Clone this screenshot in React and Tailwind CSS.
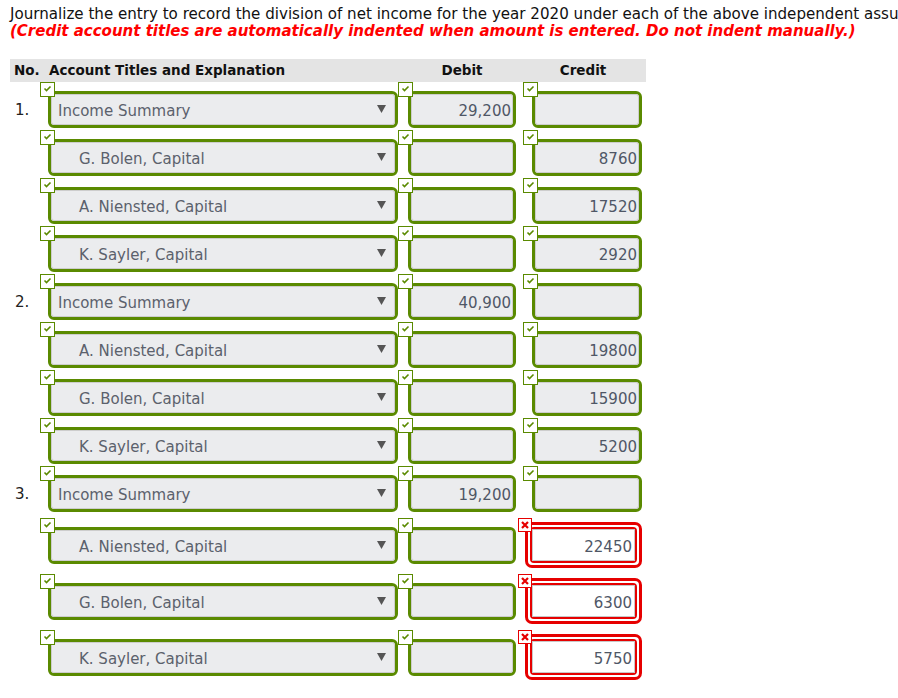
import React from 'react';

const rows = [
  { no: '1.', acct: 'Income Summary', debit: '29,200', credit: '' },
  { acct: 'G. Bolen, Capital', indent: true, credit: '8760' },
  { acct: 'A. Niensted, Capital', indent: true, credit: '17520' },
  { acct: 'K. Sayler, Capital', indent: true, credit: '2920' },
  { no: '2.', acct: 'Income Summary', debit: '40,900', credit: '' },
  { acct: 'A. Niensted, Capital', indent: true, credit: '19800' },
  { acct: 'G. Bolen, Capital', indent: true, credit: '15900' },
  { acct: 'K. Sayler, Capital', indent: true, credit: '5200' },
  { no: '3.', acct: 'Income Summary', debit: '19,200', credit: '' },
  { acct: 'A. Niensted, Capital', indent: true, credit: '22450', wrong: true },
  { acct: 'G. Bolen, Capital', indent: true, credit: '6300', wrong: true },
  { acct: 'K. Sayler, Capital', indent: true, credit: '5750', wrong: true },
];

const Check = ({ className }) => (
  <span className={`absolute w-[15px] h-[15px] bg-white border border-[#5a8a00] z-10 ${className}`}>
    <svg width="13" height="13" viewBox="0 0 13 13" className="block">
      <path d="M3.5 5.5 L5.5 7.5 L9.5 3.5" fill="none" stroke="#5a8a00" strokeWidth="1.6" />
    </svg>
  </span>
);

const Cross = ({ className }) => (
  <span className={`absolute w-[14px] h-[14px] bg-white border border-[#e60000] z-10 ${className}`}>
    <svg width="12" height="12" viewBox="0 0 12 12" className="block">
      <path d="M3 3 L9 9 M9 3 L3 9" fill="none" stroke="#e60000" strokeWidth="2.2" />
    </svg>
  </span>
);

const GreenBox = ({ children, className = '' }) => (
  <div className="h-[37px] w-full rounded-[6px] border-[3px] border-[#5a8a00] bg-[#ebecee]">
    <div className={`h-full rounded-[3px] border border-[#cdcdcd] flex items-center ${className}`}>
      {children}
    </div>
  </div>
);

const RedBox = ({ children }) => (
  <div className="h-[46px] w-full rounded-[7px] border-[3px] border-[#e60000] bg-white p-[2px]">
    <div className="h-full rounded-[4px] border-2 border-[#e60000]">
      <div className="h-full border border-[#c8c8c8] bg-white flex items-center justify-end pr-[2px]">
        {children}
      </div>
    </div>
  </div>
);

export default function App() {
  return (
    <div className="w-[898px] h-[698px] overflow-hidden bg-white font-['DejaVu_Sans',sans-serif] text-[#222]">
      <div className="pl-[10px] pt-[6px]">
        <p className="text-[15.1px] leading-[17px] whitespace-nowrap text-[#111]">
          Journalize the entry to record the division of net income for the year 2020 under each of the above independent assumptions.
        </p>
        <p className="text-[15px] leading-[17px] whitespace-nowrap font-bold italic text-[#ff0000]">
          (Credit account titles are automatically indented when amount is entered. Do not indent manually.)
        </p>

        <div className="mt-[19px] w-[636px]">
          <div className="h-[23px] bg-[#e4e4e4] flex items-center text-[13.5px] font-bold text-[#111]">
            <div className="w-[38px] pl-[4px]">No.</div>
            <div className="w-[350px] pl-[1px]">Account Titles and Explanation</div>
            <div className="w-[128px] text-center">Debit</div>
            <div className="w-[120px] text-center pr-[6px]">Credit</div>
          </div>

          <div className="mt-[3px]">
            {rows.map((r, i) => (
              <div key={i} className={`flex items-center ${r.wrong ? 'h-[56px]' : 'h-[48px]'}`}>
                <div className="w-[38px] pl-[5px] pt-[3px] text-[15px] text-[#222]">{r.no}</div>

                <div className="w-[350px] relative">
                  <Check className="-left-[8px] -top-[9px]" />
                  <GreenBox className={`justify-between pr-[8px] ${r.indent ? 'pl-[27px]' : 'pl-[6px]'}`}>
                    <span className="pt-[4px] text-[15px] text-[#5b616c]">{r.acct}</span>
                    <svg width="9" height="8" viewBox="0 0 9 8">
                      <polygon points="0,0 9,0 4.5,8" fill="#555" />
                    </svg>
                  </GreenBox>
                </div>

                <div className="ml-[10px] w-[108px] relative">
                  <Check className="-left-[10px] -top-[9px]" />
                  <GreenBox className="justify-end pr-[1px]">
                    <span className="pt-[4px] text-[15px] text-[#4f5766]">{r.debit}</span>
                  </GreenBox>
                </div>

                <div className="ml-[9px] w-[117px] relative">
                  {r.wrong ? (
                    <>
                      <Cross className="-left-[7px] -top-[4px]" />
                      <RedBox>
                        <span className="pt-[4px] text-[15px] text-[#4f5766]">{r.credit}</span>
                      </RedBox>
                    </>
                  ) : (
                    <>
                      <Check className="-left-[2px] -top-[9px]" />
                      <div className="ml-[7px]">
                        <GreenBox className="justify-end pr-[1px]">
                          <span className="pt-[4px] text-[15px] text-[#4f5766]">{r.credit}</span>
                        </GreenBox>
                      </div>
                    </>
                  )}
                </div>
              </div>
            ))}
          </div>
        </div>
      </div>
    </div>
  );
}
